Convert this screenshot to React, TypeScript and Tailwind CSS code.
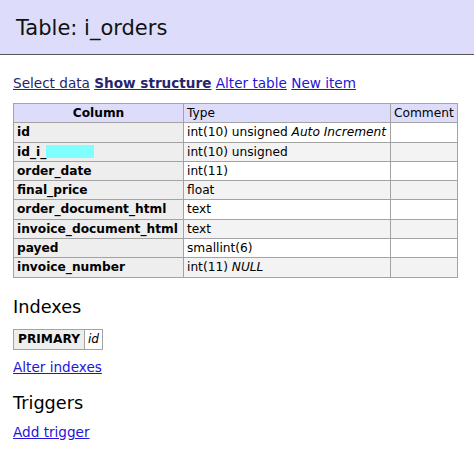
const font = { fontFamily: '"DejaVu Sans", Verdana, sans-serif' }

type Field = {
  name: string
  type: string
  extra?: string
  redacted?: boolean
}

const fields: Field[] = [
  { name: 'id', type: 'int(10) unsigned', extra: 'Auto Increment' },
  { name: 'id_i_', type: 'int(10) unsigned', redacted: true },
  { name: 'order_date', type: 'int(11)' },
  { name: 'final_price', type: 'float' },
  { name: 'order_document_html', type: 'text' },
  { name: 'invoice_document_html', type: 'text' },
  { name: 'payed', type: 'smallint(6)' },
  { name: 'invoice_number', type: 'int(11)', extra: 'NULL' },
]

const cell = 'border border-[#a3a3a3] px-[3px] py-[2px] text-left align-middle'

export default function App() {
  return (
    <div className="min-h-[452px] w-[474px] bg-white text-black" style={font}>
      <h1 className="flex h-[55px] items-center border-b border-[#555] bg-[#ddddfb] pl-[16px] pt-[1px] text-[21px] font-normal leading-[24px] text-[#111]">
        Table: i_orders
      </h1>

      <div className="px-[13px]">
        <p className="mt-[20px] text-[13.6px] leading-[17px]">
          <a href="#" className="text-[#26266e] underline">Select data</a>{' '}
          <a href="#" className="font-bold text-[#26266e] underline">Show structure</a>{' '}
          <a href="#" className="text-[#2314d8] underline">Alter table</a>{' '}
          <a href="#" className="text-[#2314d8] underline">New item</a>
        </p>

        <table className="mt-[11px] w-[444px] table-fixed border-collapse text-[12.2px] leading-[14.3px]">
          <colgroup>
            <col className="w-[170px]" />
            <col className="w-[207px]" />
            <col className="w-[67px]" />
          </colgroup>
          <thead>
            <tr className="bg-[#ddddfb]">
              <th className={`${cell} font-bold`} style={{ textAlign: 'center' }}>Column</th>
              <td className={cell}>Type</td>
              <td className={cell}>Comment</td>
            </tr>
          </thead>
          <tbody>
            {fields.map((f, i) => (
              <tr key={f.name} className={i % 2 ? 'bg-[#f3f3f3]' : 'bg-white'}>
                <th className={`${cell} whitespace-nowrap bg-[#eeeeee] font-bold`}>
                  {f.name}
                  {f.redacted && (
                    <span className="inline-block h-[13px] w-[48px] bg-[#80ffff] align-[-2px]" />
                  )}
                </th>
                <td className={`${cell} whitespace-nowrap`}>
                  {f.type}
                  {f.extra && (
                    <>
                      {' '}
                      <i>{f.extra}</i>
                    </>
                  )}
                </td>
                <td className={cell}></td>
              </tr>
            ))}
          </tbody>
        </table>

        <h2 className="mt-[18px] text-[17.7px] font-normal leading-[22px]">Indexes</h2>
        <table className="mt-[11px] border-collapse text-[12.2px] leading-[14.3px]">
          <tbody>
            <tr>
              <th className={`${cell} h-[20px] bg-[#eeeeee] px-[4px] font-bold`}>PRIMARY</th>
              <td className={`${cell} px-[3px]`}>
                <i>id</i>
              </td>
            </tr>
          </tbody>
        </table>

        <p className="mt-[9px] text-[13.6px] leading-[17px]">
          <a href="#" className="text-[#2314d8] underline">Alter indexes</a>
        </p>

        <h2 className="mt-[16px] text-[17.7px] font-normal leading-[22px]">Triggers</h2>
        <p className="mt-[10px] text-[13.6px] leading-[17px]">
          <a href="#" className="text-[#2314d8] underline">Add trigger</a>
        </p>
      </div>
    </div>
  )
}
